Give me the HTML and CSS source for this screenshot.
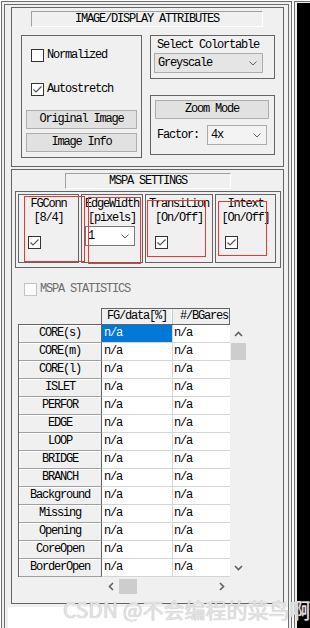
FILE: index.html
```html
<!DOCTYPE html>
<html>
<head>
<meta charset="utf-8">
<link rel="stylesheet" href="styles.css">
</head>
<body>
<div class="app">
  <div class="frame-outer">
    <div class="frame-inner">
      <div class="content">
        <section class="panel panel-img">
          <div class="title title-img">IMAGE/DISPLAY ATTRIBUTES</div>
          <div class="img-row">
            <div class="box box-a">
              <div class="chk-row chk-norm"><span class="chk"></span><span>Normalized</span></div>
              <div class="chk-row chk-auto"><span class="chk"><svg width="11" height="11" viewBox="0 0 11 11"><polyline points="1.5,5.5 4,8 9.5,2.5" fill="none" stroke="#555" stroke-width="1.2"/></svg></span><span>Autostretch</span></div>
              <div class="btn btn-orig">Original Image</div>
              <div class="btn btn-info">Image Info</div>
            </div>
            <div class="col-b">
              <div class="box box-b">
                <div class="lbl">Select Colortable</div>
                <div class="sel sel-grey"><span>Greyscale</span><svg width="8" height="5" viewBox="0 0 8 5"><polyline points="0.5,0.5 4,4 7.5,0.5" fill="none" stroke="#606060" stroke-width="1"/></svg></div>
              </div>
              <div class="box box-c">
                <div class="btn btn-zoom">Zoom Mode</div>
                <div class="factor-row"><span class="factor-lbl">Factor:</span><div class="sel sel-factor"><span>4x</span><svg width="8" height="5" viewBox="0 0 8 5"><polyline points="0.5,0.5 4,4 7.5,0.5" fill="none" stroke="#606060" stroke-width="1"/></svg></div></div>
              </div>
            </div>
          </div>
        </section>

        <section class="panel panel-mspa">
          <div class="title title-mspa">MSPA SETTINGS</div>
          <div class="group">
            <div class="cell cell-1">
              <div class="cell-text">FGConn<br>[8/4]</div>
              <span class="chk"><svg width="11" height="11" viewBox="0 0 11 11"><polyline points="1.5,5.5 4,8 9.5,2.5" fill="none" stroke="#555" stroke-width="1.2"/></svg></span>
            </div>
            <div class="cell cell-2">
              <div class="cell-text">EdgeWidth<br>[pixels]</div>
              <div class="sel sel-edge"><span>1</span><svg width="8" height="5" viewBox="0 0 8 5"><polyline points="0.5,0.5 4,4 7.5,0.5" fill="none" stroke="#606060" stroke-width="1"/></svg></div>
            </div>
            <div class="cell cell-3">
              <div class="cell-text">Transition<br>[On/Off]</div>
              <span class="chk"><svg width="11" height="11" viewBox="0 0 11 11"><polyline points="1.5,5.5 4,8 9.5,2.5" fill="none" stroke="#555" stroke-width="1.2"/></svg></span>
            </div>
            <div class="cell cell-4">
              <div class="cell-text">Intext<br>[On/Off]</div>
              <span class="chk"><svg width="11" height="11" viewBox="0 0 11 11"><polyline points="1.5,5.5 4,8 9.5,2.5" fill="none" stroke="#555" stroke-width="1.2"/></svg></span>
            </div>
            <span class="mark m1"></span>
            <span class="mark m2"></span>
            <span class="mark m3"></span>
            <span class="mark m4"></span>
          </div>

          <div class="stats-row"><span class="chk chk-dis"></span><span>MSPA STATISTICS</span></div>

          <div class="table">
            <div class="thead">
              <div class="corner"></div>
              <div class="hcells">
                <div class="hc hc1">FG/data[%]</div>
                <div class="hc hc2">#/BGares</div>
              </div>
            </div>
            <div class="tbody-wrap">
              <div class="tbody">
                <div class="row"><div class="rh">CORE(s)</div><div class="d1 selc">n/a</div><div class="d2">n/a</div></div>
                <div class="row"><div class="rh">CORE(m)</div><div class="d1">n/a</div><div class="d2">n/a</div></div>
                <div class="row"><div class="rh">CORE(l)</div><div class="d1">n/a</div><div class="d2">n/a</div></div>
                <div class="row"><div class="rh">ISLET</div><div class="d1">n/a</div><div class="d2">n/a</div></div>
                <div class="row"><div class="rh">PERFOR</div><div class="d1">n/a</div><div class="d2">n/a</div></div>
                <div class="row"><div class="rh">EDGE</div><div class="d1">n/a</div><div class="d2">n/a</div></div>
                <div class="row"><div class="rh">LOOP</div><div class="d1">n/a</div><div class="d2">n/a</div></div>
                <div class="row"><div class="rh">BRIDGE</div><div class="d1">n/a</div><div class="d2">n/a</div></div>
                <div class="row"><div class="rh">BRANCH</div><div class="d1">n/a</div><div class="d2">n/a</div></div>
                <div class="row"><div class="rh">Background</div><div class="d1">n/a</div><div class="d2">n/a</div></div>
                <div class="row"><div class="rh">Missing</div><div class="d1">n/a</div><div class="d2">n/a</div></div>
                <div class="row"><div class="rh">Opening</div><div class="d1">n/a</div><div class="d2">n/a</div></div>
                <div class="row"><div class="rh">CoreOpen</div><div class="d1">n/a</div><div class="d2">n/a</div></div>
                <div class="row"><div class="rh">BorderOpen</div><div class="d1">n/a</div><div class="d2">n/a</div></div>
              </div>
              <div class="vscroll">
                <div class="sa"><svg width="9" height="6" viewBox="0 0 9 6"><polyline points="1,5 4.5,1.5 8,5" fill="none" stroke="#606060" stroke-width="1.6"/></svg></div>
                <div class="vthumb"></div>
                <div class="vspace"></div>
                <div class="sa"><svg width="9" height="6" viewBox="0 0 9 6"><polyline points="1,1 4.5,4.5 8,1" fill="none" stroke="#606060" stroke-width="1.6"/></svg></div>
              </div>
            </div>
            <div class="hscroll">
              <div class="ha"><svg width="6" height="9" viewBox="0 0 6 9"><polyline points="5,1 1.5,4.5 5,8" fill="none" stroke="#606060" stroke-width="1.6"/></svg></div>
              <div class="hthumb"></div>
              <div class="hspace"></div>
              <div class="ha"><svg width="6" height="9" viewBox="0 0 6 9"><polyline points="1,1 4.5,4.5 1,8" fill="none" stroke="#606060" stroke-width="1.6"/></svg></div>
            </div>
          </div>
        </section>
      </div>
      <div class="below"></div>
    </div>
  </div>
  <div class="side"><div class="side-black"></div></div>
  <div class="watermark">CSDN @不会编程的菜鸟啊</div>
</div>
</body>
</html>
```

FILE: styles.css
```css
* { box-sizing: border-box; }
html, body { margin: 0; padding: 0; }
body {
  width: 310px;
  height: 628px;
  overflow: hidden;
  background: #fff;
  font-family: "Liberation Mono", monospace;
  font-size: 12px;
  letter-spacing: -1.2px;
  color: #000;
}
.app { position: relative; display: flex; width: 310px; height: 628px; }

.frame-outer {
  margin: 1px 0 0 1px;
  width: 291px;
  height: 627px;
  border: 1px solid #6e6e6e;
  border-bottom: none;
  padding: 2px 2px 0 2px;
  background: #f0f0f0;
}
.frame-inner {
  width: 285px;
  height: 100%;
  border: 1px solid #6e6e6e;
  border-bottom: none;
  display: flex;
  flex-direction: column;
  background: #f0f0f0;
}
.content { padding: 2px 4px 3px 6px; background: #f0f0f0; }
.below { flex: 1; background: #fff; margin-left: 3px; }

.side {
  margin: 1px 0 0 2px;
  flex: 1;
  border-left: 1px solid #6e6e6e;
  border-top: 1px solid #6e6e6e;
  padding: 1px 0 0 2px;
  background: #f0f0f0;
}
.side-black { background: #000; height: 100%; }

.panel { border: 1px solid #646464; }
.panel-img { height: 160px; padding-top: 3px; }
.title {
  height: 16px;
  border-top: 1px solid #a0a0a0;
  border-left: 1px solid #a0a0a0;
  border-right: 1px solid #fff;
  border-bottom: 1px solid #fff;
  text-align: center;
  line-height: 14px;
  white-space: nowrap;
}
.title-img { margin-left: 19px; width: 232px; }

.img-row { display: flex; margin: 8px 0 0 9px; gap: 8px; }
.box { border: 1px solid #646464; }
.box-a {
  width: 121px;
  height: 123px;
  display: flex;
  flex-direction: column;
  align-items: flex-start;
}
.chk-row { display: flex; align-items: center; height: 13px; margin-left: 9px; gap: 3px; line-height: 13px; }
.chk-norm { margin-top: 13px; }
.chk-auto { margin-top: 21px; }
.chk {
  width: 13px;
  height: 13px;
  border: 1px solid #333;
  background: #fff;
  display: flex;
  flex: none;
}
.chk-dis { border-color: #c4c4c4; background: #fbfbfb; }

.btn {
  height: 19px;
  border: 1px solid #adadad;
  background: #e1e1e1;
  text-align: center;
  line-height: 17px;
  white-space: nowrap;
}
.btn-orig { margin: 14px 0 0 4px; width: 111px; }
.btn-info { margin: 4px 0 0 4px; width: 111px; }

.col-b { display: flex; flex-direction: column; gap: 16px; }
.box-b { width: 125px; height: 44px; padding-top: 2px; }
.lbl { line-height: 14px; padding-left: 6px; white-space: nowrap; }
.sel {
  display: flex;
  align-items: center;
  justify-content: space-between;
  height: 20px;
  border: 1px solid #acacac;
  padding: 0 5px 0 3px;
  line-height: 18px;
}
.sel-grey { margin: 1px 0 0 3px; width: 109px; background: #e5e5e5; }
.box-c { width: 125px; height: 60px; }
.btn-zoom { margin: 4px 0 0 4px; width: 114px; }
.factor-row { display: flex; align-items: center; margin-top: 6px; padding-left: 6px; }
.factor-lbl { width: 50px; }
.sel-factor { width: 60px; background: #f3f3f3; }

.panel-mspa { margin-top: 2px; height: 435px; padding-top: 3px; }
.title-mspa { margin-left: 53px; width: 166px; }

.group {
  position: relative;
  margin: 2px 0 0 3px;
  width: 266px;
  height: 77px;
  border: 1px solid #646464;
  display: flex;
  gap: 2px;
  padding: 2px;
}
.cell {
  border: 1px solid #646464;
  height: 69px;
  display: flex;
  flex-direction: column;
  align-items: flex-start;
  padding-top: 2px;
}
.cell-1 { width: 61px; }
.cell-2 { width: 62px; }
.cell-3 { width: 68px; }
.cell-4 { width: 61px; }
.cell-text { align-self: stretch; text-align: center; line-height: 14px; white-space: nowrap; }
.cell .chk { margin: 11px 0 0 9px; }
.sel-edge { margin: 1px 0 0 3px; width: 50px; background: #fff; border-color: #7a7a7a; padding: 0 5px 0 2px; }

.mark { position: absolute; border: 1px solid #e8383a; }
.m1 { left: 8px; top: 4px; width: 61px; height: 66px; }
.m2 { left: 72px; top: 5px; width: 53px; height: 67px; }
.m3 { left: 131px; top: 8px; width: 59px; height: 57px; }
.m4 { left: 202px; top: 9px; width: 49px; height: 55px; }

.stats-row { display: flex; align-items: center; height: 13px; margin: 15px 0 0 12px; gap: 3px; color: #6d6d6d; line-height: 13px; }

.table { margin: 12px 0 0 6px; width: 228px; }
.thead { display: flex; height: 16px; }
.corner { width: 83px; }
.hcells {
  display: flex;
  width: 129px;
  height: 16px;
  border-top: 1px solid #646464;
  border-left: 1px solid #646464;
  border-right: 1px solid #646464;
  background: #f0f0f0;
}
.hc { line-height: 15px; white-space: nowrap; overflow: hidden; }
.hc1 { width: 71px; border-right: 1px solid #c8c8c8; text-align: center; box-shadow: inset -1px 0 0 #fff; }
.hc2 { width: 56px; padding-left: 7px; }

.tbody-wrap { display: flex; }
.tbody { width: 212px; border-top: 1px solid #646464; border-left: 1px solid #646464; }
.row { display: flex; height: 18px; }
.rh {
  width: 83px;
  border-right: 1px solid #646464;
  border-bottom: 1px solid #a0a0a0;
  box-shadow: inset 1px 1px 0 #fff;
  text-align: center;
  line-height: 17px;
  background: #f0f0f0;
  white-space: nowrap;
}
.d1 {
  width: 71px;
  background: #fff;
  border-right: 1px solid #d4d4d4;
  border-bottom: 1px solid #d4d4d4;
  padding-left: 2px;
  line-height: 17px;
}
.d2 {
  width: 57px;
  background: #fff;
  border-bottom: 1px solid #d4d4d4;
  padding-left: 1px;
  line-height: 17px;
}
.d1.selc { background: #0078d7; color: #fff; }

.vscroll { width: 16px; height: 252px; margin: 1px 0 0 1px; display: flex; flex-direction: column; }
.sa { height: 18px; display: flex; align-items: center; justify-content: center; flex: none; }
.vthumb { height: 17px; background: #cdcdcd; flex: none; }
.vspace { flex: 1; }

.hscroll { display: flex; margin: 2px 0 0 84px; width: 128px; height: 15px; }
.ha { width: 17px; display: flex; align-items: center; justify-content: center; flex: none; }
.hthumb { width: 18px; background: #cdcdcd; flex: none; }
.hspace { flex: 1; }

.watermark {
  position: absolute;
  left: 63px;
  top: 599px;
  font-family: "Noto Sans CJK SC", "Noto Sans", sans-serif;
  font-size: 21px;
  line-height: 21px;
  letter-spacing: 0;
  white-space: nowrap;
  color: #e4e4e4;
  text-shadow: 0 0 1px #a8a8a8;
}
```
